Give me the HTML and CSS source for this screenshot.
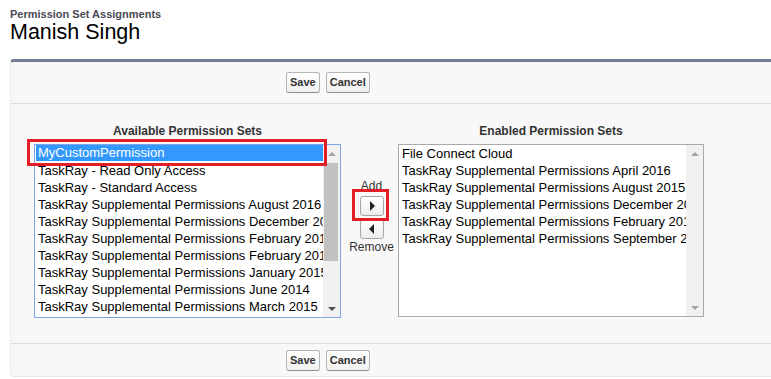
FILE: index.html
```html
<!DOCTYPE html>
<html lang="en">
<head>
    <title>Permission Set Assignments</title>
    <link rel="stylesheet" href="styles.css">
</head>
<body>
    <div class="page-title">
        <h1 class="page-type">Permission Set Assignments</h1>
        <h2 class="page-desc">Manish Singh</h2>
    </div>

    <div class="panel">
        <div class="btn-row top">
            <button class="btn">Save</button>
            <button class="btn">Cancel</button>
        </div>

        <div class="duel">
            <div class="col">
                <div class="col-label">Available Permission Sets</div>
                <div class="listbox focused">
                    <div class="options">
                        <div class="opt selected">MyCustomPermission</div>
                        <div class="opt">TaskRay - Read Only Access</div>
                        <div class="opt">TaskRay - Standard Access</div>
                        <div class="opt">TaskRay Supplemental Permissions August 2016</div>
                        <div class="opt">TaskRay Supplemental Permissions December 2015</div>
                        <div class="opt">TaskRay Supplemental Permissions February 2015</div>
                        <div class="opt">TaskRay Supplemental Permissions February 2016</div>
                        <div class="opt">TaskRay Supplemental Permissions January 2015</div>
                        <div class="opt">TaskRay Supplemental Permissions June 2014</div>
                        <div class="opt">TaskRay Supplemental Permissions March 2015</div>
                    </div>
                    <div class="scrollbar">
                        <span class="sb-btn"><span class="tri-up"></span></span>
                        <span class="thumb"></span>
                        <span class="track"></span>
                        <span class="sb-btn dark"><span class="tri-down"></span></span>
                    </div>
                    <!-- red callout round the picked option -->
                    <span class="mark mark-option"></span>
                </div>
            </div>

            <div class="mover">
                <div class="mover-label">Add</div>
                <button class="arrow-btn"><span class="tri-right"></span></button>
                <button class="arrow-btn"><span class="tri-left"></span></button>
                <div class="mover-label">Remove</div>
                <span class="mark mark-add"></span>
            </div>

            <div class="col">
                <div class="col-label">Enabled Permission Sets</div>
                <div class="listbox">
                    <div class="options">
                        <div class="opt">File Connect Cloud</div>
                        <div class="opt">TaskRay Supplemental Permissions April 2016</div>
                        <div class="opt">TaskRay Supplemental Permissions August 2015</div>
                        <div class="opt">TaskRay Supplemental Permissions December 2014</div>
                        <div class="opt">TaskRay Supplemental Permissions February 2014</div>
                        <div class="opt">TaskRay Supplemental Permissions September 2015</div>
                    </div>
                    <div class="scrollbar">
                        <span class="sb-btn"><span class="tri-up"></span></span>
                        <span class="track"></span>
                        <span class="sb-btn"><span class="tri-down"></span></span>
                    </div>
                </div>
            </div>
        </div>

        <div class="btn-row bottom">
            <button class="btn">Save</button>
            <button class="btn">Cancel</button>
        </div>
    </div>
</body>
</html>
```

FILE: styles.css
```css
body{
    margin: 0;
    font-family: "Liberation Sans", Arial, sans-serif;
    color: #000;
    background-color: #fff;
    overflow: hidden;
}
.page-title{
    padding: 8px 10px 0;
}
.page-type{
    margin: 0;
    font-size: 11px;
    line-height: 13px;
    font-weight: bold;
    color: #4a4a56;
}
.page-desc{
    margin: 0;
    font-size: 21.5px;
    line-height: 22px;
    font-weight: normal;
    color: #000;
}

/* block panel */
.panel{
    margin: 16px -20px 0 10px;
    background-color: #f8f8f8;
    border: 1px solid #eaeaea;
    border-top: 3px solid #747e96;
    border-radius: 4px;
}
.btn-row{
    display: flex;
    gap: 6px;
    padding-left: 275px;
}
.btn-row.top{
    padding-top: 10px;
    padding-bottom: 10px;
    border-bottom: 1px solid #dbdbdb;
}
.btn-row.bottom{
    padding-top: 6px;
    padding-bottom: 5px;
    border-top: 1px solid #dbdbdb;
}
.btn{
    font-family: "Liberation Sans", Arial, sans-serif;
    font-size: 11px;
    font-weight: bold;
    line-height: 13px;
    color: #333;
    padding: 3px 3px;
    background: linear-gradient(#ffffff, #f0f0f0);
    border: 1px solid #b5b5b5;
    border-bottom-color: #8f8f8f;
    border-radius: 3px;
}

/* duel list */
.duel{
    display: flex;
    padding: 20px 0 25px 23px;
}
.col{
    display: flex;
    flex-direction: column;
}
.col-label{
    font-size: 12px;
    line-height: 14px;
    font-weight: bold;
    color: #333;
    text-align: center;
    margin-bottom: 6px;
}
.listbox{
    position: relative;
    display: flex;
    width: 304px;
    height: 171px;
    background-color: #fff;
    border: 1px solid #a9a9a9;
}
.listbox.focused{
    width: 305px;
    height: 172px;
    border-color: #7fa5e4;
}
.options{
    flex: 1;
    overflow: hidden;
    padding: 0 0 0 1px;
}
.opt{
    font-size: 13px;
    line-height: 17px;
    height: 17px;
    padding-left: 2px;
    white-space: nowrap;
    overflow: hidden;
    color: #000;
}
.opt.selected{
    background-color: #3399ff;
    color: #fff;
    height: 16px;
    line-height: 16px;
    margin-bottom: 1px;
}
.scrollbar{
    width: 17px;
    display: flex;
    flex-direction: column;
    background-color: #f1f1f1;
}
.sb-btn{
    height: 17px;
    flex: none;
    display: flex;
    align-items: center;
    justify-content: center;
}
.tri-up{
    border-left: 4px solid transparent;
    border-right: 4px solid transparent;
    border-bottom: 4px solid #a3a3a3;
}
.tri-down{
    border-left: 4px solid transparent;
    border-right: 4px solid transparent;
    border-top: 4px solid #a3a3a3;
}
.sb-btn.dark .tri-down{
    border-top-color: #505050;
}
.thumb{
    height: 98px;
    flex: none;
    margin: 1px 2px 0 1px;
    background-color: #c1c1c1;
}
.track{
    flex: 1;
}

/* add / remove column */
.mover{
    position: relative;
    width: 57px;
    display: flex;
    flex-direction: column;
    align-items: center;
    padding-top: 55px;
}
.mover-label{
    font-size: 12px;
    line-height: 14px;
    color: #333;
    margin-left: 4px;
}
.arrow-btn{
    width: 24px;
    height: 20px;
    margin: 3px 0 0 4px;
    padding: 0;
    display: flex;
    align-items: center;
    justify-content: center;
    background: linear-gradient(#ffffff, #ececec);
    border: 1px solid #a5a5a5;
    border-radius: 3px;
}
.arrow-btn + .mover-label{
    margin-top: 1px;
}
.tri-right{
    border-top: 5px solid transparent;
    border-bottom: 5px solid transparent;
    border-left: 5px solid #222;
    margin-left: 2px;
}
.tri-left{
    border-top: 5px solid transparent;
    border-bottom: 5px solid transparent;
    border-right: 5px solid #222;
    margin-right: 1px;
}

/* red callouts drawn over the screenshot */
.mark{
    position: absolute;
    border: 3px solid #e31e26;
    box-sizing: border-box;
}
.mark-option{
    left: -8px;
    top: -6px;
    width: 300px;
    height: 27px;
}
.mark-add{
    left: 11px;
    top: 65px;
    width: 37px;
    height: 32px;
}
```
